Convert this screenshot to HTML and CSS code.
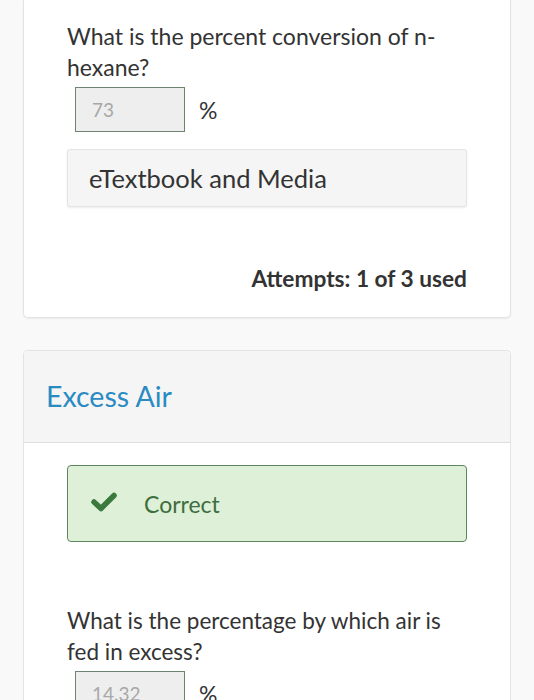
FILE: index.html
```html
<!DOCTYPE html>
<html>
<head>
<meta charset="utf-8">
<link rel="stylesheet" href="styles.css">
</head>
<body>
<div class="page">
  <div class="card card-top">
    <div class="card-body first">
      <p class="question">What is the percent conversion of n-<br>hexane?</p>
      <div class="answer-row">
        <div class="answer-input">73</div>
        <span class="unit">%</span>
      </div>
      <div class="media-box">eTextbook and Media</div>
      <div class="attempts">Attempts: 1 of 3 used</div>
    </div>
  </div>

  <div class="card card-second">
    <div class="card-header">
      <h2 class="section-title">Excess Air</h2>
    </div>
    <div class="card-body second">
      <div class="correct-box">
        <svg class="check" width="28" height="22" viewBox="0 0 28 22">
          <polyline points="4,11 11,17.5 24,4.5" fill="none" stroke="#3b7a3c" stroke-width="5.5" stroke-linecap="round" stroke-linejoin="round"/>
        </svg>
        <span class="correct-text">Correct</span>
      </div>
      <p class="question q2">What is the percentage by which air is<br>fed in excess?</p>
      <div class="answer-row">
        <div class="answer-input">14.32</div>
        <span class="unit">%</span>
      </div>
    </div>
  </div>
</div>
</body>
</html>
```

FILE: styles.css
```css
html, body {
  margin: 0;
  padding: 0;
}
body {
  background: #f9f9f9;
  font-family: Lato, "Open Sans", "Liberation Sans", sans-serif;
  color: #333333;
  height: 700px;
  overflow: hidden;
}
.page {
  padding-left: 23px;
  width: 488px;
}
.card {
  background: #ffffff;
  border: 1px solid #e3e3e3;
  box-sizing: border-box;
  width: 488px;
}
.card-top {
  border-top: none;
  border-radius: 0 0 5px 5px;
  box-shadow: 0 1px 2px rgba(0,0,0,0.06);
}
.card-second {
  margin-top: 32px;
  border-bottom: none;
  border-radius: 5px 5px 0 0;
}
.card-body {
  padding-left: 43px;
  padding-right: 43px;
}
.card-body.first {
  padding-top: 21px;
  padding-bottom: 25px;
}
.question {
  margin: 0;
  font-size: 23px;
  line-height: 31px;
  color: #333333;
}
.answer-row {
  display: flex;
  align-items: center;
  margin-top: 4px;
  margin-left: 8px;
}
.answer-input {
  width: 110px;
  height: 45px;
  box-sizing: border-box;
  border: 1.5px solid #6f846f;
  background: #eeeeee;
  color: #a8a8a8;
  font-size: 19px;
  display: flex;
  align-items: center;
  padding-left: 16px;
}
.unit {
  margin-left: 14px;
  font-size: 23px;
  color: #333333;
}
.media-box {
  margin-top: 17px;
  height: 58px;
  box-sizing: border-box;
  background: #f5f5f5;
  border: 1px solid #e4e4e4;
  border-radius: 3px;
  box-shadow: 0 1px 2px rgba(0,0,0,0.08);
  display: flex;
  align-items: center;
  padding-left: 21px;
  font-size: 25.5px;
  color: #333333;
}
.attempts {
  margin-top: 58px;
  text-align: right;
  font-size: 22.7px;
  line-height: 27px;
  font-weight: bold;
  color: #333333;
}
.card-header {
  background: #f5f5f5;
  height: 92px;
  box-sizing: border-box;
  border-bottom: 1px solid #dedede;
  display: flex;
  align-items: center;
  padding-left: 22px;
  padding-bottom: 2px;
  border-radius: 5px 5px 0 0;
}
.section-title {
  margin: 0;
  font-weight: normal;
  font-size: 28.5px;
  color: #2a8bc3;
}
.card-body.second {
  padding-top: 22px;
  padding-bottom: 20px;
}
.correct-box {
  height: 77px;
  box-sizing: border-box;
  background: #dff0d8;
  border: 1.5px solid #5e865e;
  border-radius: 4px;
  display: flex;
  align-items: center;
  padding-left: 22px;
}
.check {
  display: block;
  margin-top: -4px;
}
.correct-text {
  margin-left: 26px;
  font-size: 23px;
  color: #3d6e3d;
}
.q2 {
  margin-top: 63px;
  font-size: 22.5px;
}
```
